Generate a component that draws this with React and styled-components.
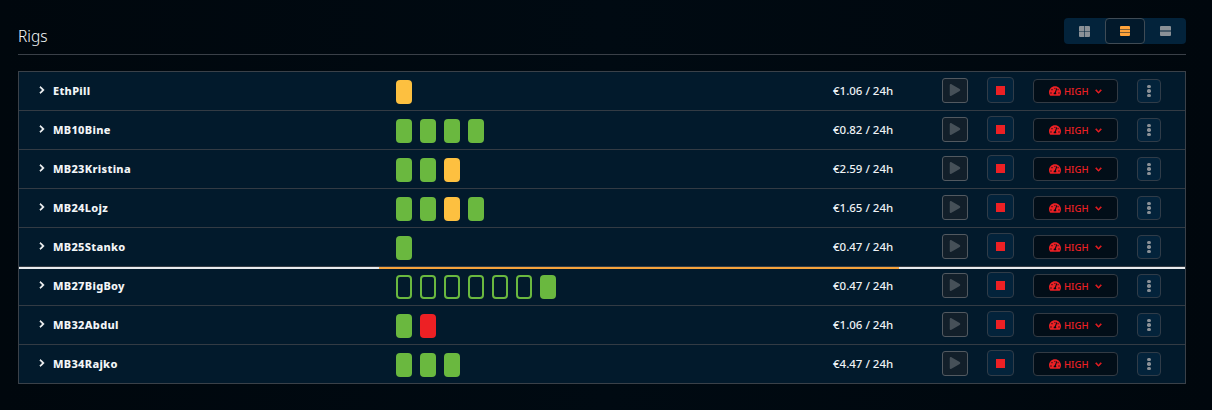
import React from 'react'
import styled, { createGlobalStyle } from 'styled-components'
import { FaChevronRight, FaChevronDown, FaPlay, FaTachometerAlt } from 'react-icons/fa'

const rigs = [
  { name: 'EthPill', price: '€1.06', bars: ['warn'] },
  { name: 'MB10Bine', price: '€0.82', bars: ['ok', 'ok', 'ok', 'ok'] },
  { name: 'MB23Kristina', price: '€2.59', bars: ['ok', 'ok', 'warn'] },
  { name: 'MB24Lojz', price: '€1.65', bars: ['ok', 'ok', 'warn', 'ok'] },
  { name: 'MB25Stanko', price: '€0.47', bars: ['ok'] },
  { name: 'MB27BigBoy', price: '€0.47', bars: ['idle', 'idle', 'idle', 'idle', 'idle', 'idle', 'ok'], progress: true },
  { name: 'MB32Abdul', price: '€1.06', bars: ['ok', 'bad'] },
  { name: 'MB34Rajko', price: '€4.47', bars: ['ok', 'ok', 'ok'] },
]

export default function App() {
  return (
    <Page>
      <GlobalStyle />
      <Header>
        <Title>Rigs</Title>
        <Toggle>
          <ToggleButton>
            <svg width="11" height="11" viewBox="0 0 11 11"><path d="M0 1a1 1 0 0 1 1-1h4.200v5.200H0zM5.800 0H10a1 1 0 0 1 1 1v4.200H5.800zM0 5.800h5.200V11H1a1 1 0 0 1-1-1zM5.800 5.800H11V10a1 1 0 0 1-1 1H5.800z" fill="#8b9197" /></svg>
          </ToggleButton>
          <ToggleButton $active>
            <svg width="10" height="10" viewBox="0 0 10 10"><path d="M0 1a1 1 0 0 1 1-1h8a1 1 0 0 1 1 1v2.100H0zM0 3.600h10v2.800H0zM0 6.900h10V9a1 1 0 0 1-1 1H1a1 1 0 0 1-1-1z" fill="#ffa33a" /></svg>
          </ToggleButton>
          <ToggleButton>
            <svg width="11" height="10" viewBox="0 0 11 10"><path d="M0 1a1 1 0 0 1 1-1h9a1 1 0 0 1 1 1v3.600H0zM0 5.400h11V9a1 1 0 0 1-1 1H1a1 1 0 0 1-1-1z" fill="#8b9197" /></svg>
          </ToggleButton>
        </Toggle>
      </Header>
      <Panel>
        {rigs.map((rig) => (
          <Row key={rig.name}>
            {rig.progress && <Progress><ProgressFill /></Progress>}
            <Expand><FaChevronRight /></Expand>
            <Name>{rig.name}</Name>
            <Bars>
              {rig.bars.map((status, i) => <Bar key={i} $status={status} />)}
            </Bars>
            <Price>{rig.price} / 24h</Price>
            <PlayButton><FaPlay /></PlayButton>
            <StopButton><StopIcon /></StopButton>
            <PowerSelect>
              <FaTachometerAlt />
              <span>HIGH</span>
              <Caret><FaChevronDown /></Caret>
            </PowerSelect>
            <MenuButton><Dot /><Dot /><Dot /></MenuButton>
          </Row>
        ))}
      </Panel>
    </Page>
  )
}

const GlobalStyle = createGlobalStyle`
  html, body {
    margin: 0;
    background: #00080f;
  }
  * {
    box-sizing: border-box;
  }
`

const Page = styled.div`
  width: 1212px;
  height: 410px;
  padding: 18px 26px 0 18px;
  background: linear-gradient(90deg, #00070d 0%, #000a12 50%, #00070d 100%);
  color: #fff;
  font-family: "Noto Sans", "Open Sans", sans-serif;
  overflow: hidden;
`

const Header = styled.header`
  height: 37px;
  display: flex;
  align-items: flex-start;
  justify-content: space-between;
  border-bottom: 1px solid #3a4048;
  margin-bottom: 16px;
`

const Title = styled.h2`
  margin: 7px 0 0;
  font-size: 15.5px;
  line-height: 22px;
  font-weight: 300;
  color: #f4f7f9;
`

const Toggle = styled.div`
  display: flex;
  width: 122px;
  height: 26px;
  background: #03233b;
  border-radius: 4px;
`

const ToggleButton = styled.div`
  flex: 1;
  display: flex;
  align-items: center;
  justify-content: center;
  border-radius: 4px;
  border: 1px solid ${(p) => (p.$active ? '#3f4b55' : 'transparent')};
  background: ${(p) => (p.$active ? '#02192b' : 'transparent')};
`

const Panel = styled.section`
  border: 1px solid #3a4149;
  background: #021a2c;
`

const Row = styled.div`
  position: relative;
  display: flex;
  align-items: center;
  height: 39px;
  padding-left: 19px;
  border-top: 1px solid #333b44;
  &:first-child {
    border-top: none;
    height: 38px;
  }
`

const Progress = styled.div`
  position: absolute;
  left: 0;
  right: 0;
  top: 0;
  height: 2px;
  background: #e8ebee;
`

const ProgressFill = styled.div`
  margin-left: 360px;
  width: 520px;
  height: 2px;
  background: #f6a33c;
`

const Expand = styled.div`
  width: 15px;
  display: flex;
  font-size: 8px;
  color: #fff;
  margin-top: -2px;
  svg {
    stroke: #fff;
    stroke-width: 40;
  }
`

const Name = styled.div`
  width: 343px;
  font-size: 11px;
  font-weight: 800;
  letter-spacing: 0.3px;
  color: #f2f5f7;
  margin-top: -2px;
`

const barColors = { ok: '#6ab83f', warn: '#fdc040', bad: '#ed2024' }

const Bars = styled.div`
  width: 437px;
  display: flex;
  gap: 8px;
  margin-top: 2px;
`

const Bar = styled.div`
  width: 16px;
  height: 24px;
  border-radius: 4px;
  background: ${(p) => (p.$status === 'idle' ? 'transparent' : barColors[p.$status])};
  border: ${(p) => (p.$status === 'idle' ? '2px solid #6ab83f' : 'none')};
`

const Price = styled.div`
  width: 109px;
  font-size: 11.5px;
  font-weight: 500;
  color: #eef2f5;
  margin-top: -1px;
`

const PlayButton = styled.div`
  width: 26px;
  height: 25px;
  display: flex;
  align-items: center;
  justify-content: center;
  border: 1px solid #525960;
  border-radius: 3px;
  background: #121f2a;
  color: #465058;
  font-size: 12px;
  margin: -2px 19px 0 0;
`

const StopButton = styled.div`
  width: 27px;
  height: 26px;
  display: flex;
  align-items: center;
  justify-content: center;
  border: 1px solid #303c48;
  border-radius: 4px;
  background: #03233b;
  margin: -2px 19px 0 0;
`

const StopIcon = styled.div`
  width: 9px;
  height: 9px;
  background: #ed2024;
`

const PowerSelect = styled.div`
  width: 85px;
  height: 24px;
  display: flex;
  align-items: center;
  padding-left: 15px;
  gap: 3px;
  border: 1px solid #333b44;
  border-radius: 4px;
  background: #020e18;
  color: #ed2024;
  font-size: 9.5px;
  font-weight: 500;
  margin-right: 19px;
  svg {
    font-size: 12px;
  }
`

const Caret = styled.span`
  display: flex;
  margin-left: 4px;
  svg {
    font-size: 7px;
    stroke: #ed2024;
    stroke-width: 40;
  }
`

const MenuButton = styled.div`
  width: 24px;
  height: 24px;
  display: flex;
  flex-direction: column;
  align-items: center;
  justify-content: center;
  gap: 1px;
  border: 1px solid #303c48;
  border-radius: 4px;
  background: #03233b;
`

const Dot = styled.div`
  width: 3.5px;
  height: 3.5px;
  border-radius: 50%;
  background: #8b9197;
`
